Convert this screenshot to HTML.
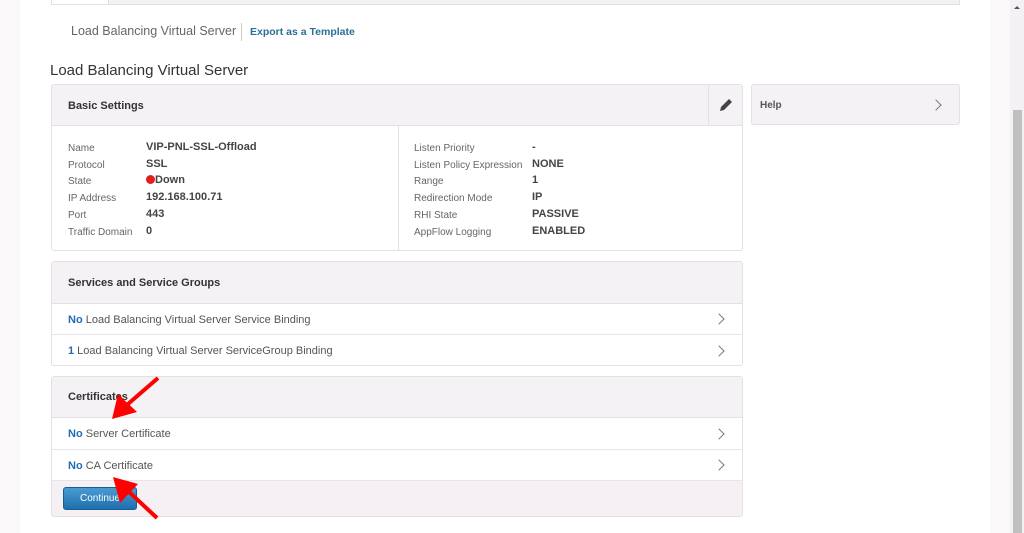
<!DOCTYPE html><html><head><style>
body{margin:0;width:1024px;height:533px;overflow:hidden;background:#fbf8fa;font-family:"Liberation Sans",sans-serif;position:relative;color:#333}
.a{position:absolute}
.main{left:20px;top:0;width:970px;height:533px;background:#fff}
.sb{left:1010px;top:0;width:14px;height:533px;background:#f3f1f3}
.panel{position:absolute;border:1px solid #e4e0e4;border-radius:3px;background:#fff;box-sizing:border-box}
.hd{background:#f4f2f4;border-bottom:1px solid #e4e0e4;font-weight:bold;font-size:11px;padding-left:16px;box-sizing:border-box}
.row{border-bottom:1px solid #e8e4e8;font-size:11px;padding-left:16px;box-sizing:border-box;position:relative;color:#555}
.row b{color:#1f6db5}
.chev{position:absolute;right:19px;top:50%;width:7px;height:7px;border-right:1px solid #777;border-top:1px solid #777;transform:translateY(-50%) rotate(45deg)}
.kv{position:absolute;font-size:10px;color:#666;line-height:16.7px}
.kv2{position:absolute;font-size:11px;font-weight:bold;color:#444;line-height:16.7px}
</style></head><body>
<div class="a main"></div>
<div class="a sb"><div class="a" style="left:3px;top:110px;width:9px;height:423px;background:#c1c0c1"></div><div class="a" style="left:4px;top:6px;border:3px solid transparent;border-bottom:3px solid #555;border-top:0"></div></div>
<div class="a" style="left:51px;top:0;width:909px;height:5px;background:#f3f1f3;border:1px solid #e4e0e4;border-top:0;box-sizing:border-box"></div>
<div class="a" style="left:52px;top:0;width:56px;height:4px;background:#fff;border-right:1px solid #ddd"></div>
<div class="a" style="left:71px;top:24px;font-size:12.5px;color:#666">Load Balancing Virtual Server</div>
<div class="a" style="left:241px;top:23px;width:1px;height:18px;background:#ccc"></div>
<div class="a" style="left:250px;top:26px;font-size:10.5px;font-weight:bold;color:#2a6f96">Export as a Template</div>
<div class="a" style="left:50px;top:62px;font-size:15px;color:#333">Load Balancing Virtual Server</div>

<div class="panel" style="left:51px;top:84px;width:692px;height:167px">
<div class="hd" style="height:41px;line-height:42px">Basic Settings</div>
<div class="a" style="left:656px;top:0;width:1px;height:41px;background:#e4e0e4"></div>
<svg class="a" style="left:665px;top:11px" width="18" height="18" viewBox="0 0 18 18"><path d="M3 15l1-4 8-8 3 3-8 8z" fill="#444"/></svg>
<div class="a" style="left:346px;top:41px;width:1px;height:125px;background:#e4e0e4"></div>
<div class="kv" style="left:16px;top:56px">Name<br>Protocol<br>State<br>IP Address<br>Port<br>Traffic Domain</div>
<div class="kv2" style="left:94px;top:54px">VIP-PNL-SSL-Offload<br>SSL<br><span style="display:inline-block;width:9px;height:9px;border-radius:50%;background:#e51c1c;vertical-align:-1px"></span>Down<br>192.168.100.71<br>443<br>0</div>
<div class="kv" style="left:362px;top:56px">Listen Priority<br>Listen Policy Expression<br>Range<br>Redirection Mode<br>RHI State<br>AppFlow Logging</div>
<div class="kv2" style="left:480px;top:54px">-<br>NONE<br>1<br>IP<br>PASSIVE<br>ENABLED</div>
</div>

<div class="panel" style="left:751px;top:84px;width:209px;height:41px;background:#f4f2f4"><div style="font-size:10px;font-weight:bold;color:#555;padding:15px 0 0 8px">Help</div><div class="chev"></div></div>

<div class="panel" style="left:51px;top:261px;width:692px;height:105px">
<div class="hd" style="height:42px;line-height:42px">Services and Service Groups</div>
<div class="row" style="height:31px;line-height:32px"><b>No</b> Load Balancing Virtual Server Service Binding<div class="chev"></div></div>
<div class="row" style="height:31px;line-height:32px;border:0"><b>1</b> Load Balancing Virtual Server ServiceGroup Binding<div class="chev"></div></div>
</div>

<div class="panel" style="left:51px;top:376px;width:692px;height:141px;background:#f4f0f4">
<div class="hd" style="height:41px;line-height:41px">Certificates</div>
<div class="row" style="height:32px;line-height:33px;background:#fff"><b>No</b> Server Certificate<div class="chev"></div></div>
<div class="row" style="height:31px;line-height:32px;background:#fff"><b>No</b> CA Certificate<div class="chev"></div></div>
<div class="a" style="left:11px;top:110px;width:74px;height:23px;border-radius:3px;background:linear-gradient(#4a9ad2,#1f6fae);border:1px solid #1a5d92;box-sizing:border-box;color:#fff;font-size:10px;text-align:center;line-height:22px">Continue</div>
</div>

<svg class="a" style="left:0;top:0" width="1024" height="533"><g fill="#f00" stroke="#f00" stroke-width="4"><line x1="158" y1="378" x2="128" y2="404"/><line x1="157" y1="518" x2="128" y2="491"/></g><polygon points="112,419 118,394 137,412" fill="#f00"/><polygon points="113,477 138,484 120,503" fill="#f00"/></svg>
</body></html>
